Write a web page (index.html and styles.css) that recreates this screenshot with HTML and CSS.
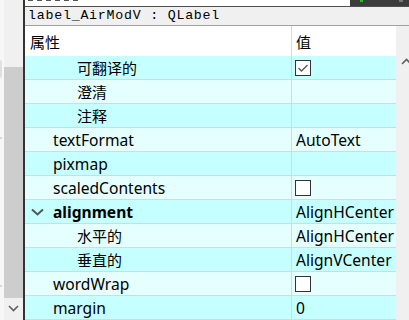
FILE: index.html
```html
<!DOCTYPE html>
<html>
<head>
<meta charset="utf-8">
<link rel="stylesheet" href="styles.css">
</head>
<body>
<div class="app">
  <div class="left">
    <div class="edge">
      <span class="mark m1"></span>
      <span class="mark m2"></span>
      <span class="mark m3"></span>
    </div>
    <div class="vscroll">
      <div class="track-top"></div>
      <div class="thumb"></div>
      <div class="arrow-down">
        <svg width="19" height="22" viewBox="0 0 19 22"><polyline points="5,8 9.5,12.5 14,8" fill="none" stroke="#606060" stroke-width="1.6"/></svg>
      </div>
    </div>
  </div>
  <div class="main">
    <div class="top">
      <div class="filter">
        <span class="dash"></span><span class="dash"></span><span class="dash"></span><span class="dash"></span><span class="dash"></span><span class="dash"></span>
      </div>
      <div class="dark"><span class="green"></span><span class="greymark"></span></div>
    </div>
    <div class="titlebar">label_AirModV : QLabel</div>
    <div class="body">
      <div class="table">
        <div class="row head">
          <div class="name cjk">属性</div>
          <div class="val cjk">值</div>
        </div>
        <div class="row dk">
          <div class="name l2 cjk">可翻译的</div>
          <div class="val">
            <svg class="cb" width="16" height="16" viewBox="0 0 16 16"><rect x="0.5" y="0.5" width="15" height="15" fill="#fff" stroke="#333"/><polyline points="3.5,8 6.5,11 12.5,5" fill="none" stroke="#555" stroke-width="1.3"/></svg>
          </div>
        </div>
        <div class="row lt">
          <div class="name l2 cjk">澄清</div>
          <div class="val"></div>
        </div>
        <div class="row dk">
          <div class="name l2 cjk">注释</div>
          <div class="val"></div>
        </div>
        <div class="row lt">
          <div class="name l1">textFormat</div>
          <div class="val">AutoText</div>
        </div>
        <div class="row dk">
          <div class="name l1">pixmap</div>
          <div class="val"></div>
        </div>
        <div class="row lt">
          <div class="name l1">scaledContents</div>
          <div class="val">
            <svg class="cb" width="16" height="16" viewBox="0 0 16 16"><rect x="0.5" y="0.5" width="15" height="15" fill="#fff" stroke="#333"/></svg>
          </div>
        </div>
        <div class="row dk">
          <div class="name l1 bold">
            <svg class="chev" width="13" height="8" viewBox="0 0 13 8"><polyline points="1,1.5 6.5,6.5 12,1.5" fill="none" stroke="#555" stroke-width="2"/></svg>alignment</div>
          <div class="val">AlignHCenter|AlignVCenter</div>
        </div>
        <div class="row lt">
          <div class="name l2 cjk">水平的</div>
          <div class="val">AlignHCenter</div>
        </div>
        <div class="row dk">
          <div class="name l2 cjk">垂直的</div>
          <div class="val">AlignVCenter</div>
        </div>
        <div class="row lt">
          <div class="name l1">wordWrap</div>
          <div class="val">
            <svg class="cb" width="16" height="16" viewBox="0 0 16 16"><rect x="0.5" y="0.5" width="15" height="15" fill="#fff" stroke="#333"/></svg>
          </div>
        </div>
        <div class="row dk">
          <div class="name l1">margin</div>
          <div class="val">0</div>
        </div>
      </div>
      <div class="rscroll">
        <svg width="13" height="16" viewBox="0 0 13 16"><polyline points="6,12 10.5,7.5 15,12" fill="none" stroke="#606060" stroke-width="1.6"/></svg>
      </div>
    </div>
  </div>
</div>
</body>
</html>
```
FILE: styles.css
```css
html, body {
  margin: 0;
  padding: 0;
}
body {
  width: 409px;
  height: 320px;
  overflow: hidden;
  background: #f0f0f0;
  font-family: "Noto Sans", "Noto Sans CJK SC", sans-serif;
  font-size: 15.6px;
  color: #000;
}
.app {
  display: flex;
  height: 320px;
}
.left {
  width: 23px;
  display: flex;
  border-right: 2px solid #333;
  flex: none;
}
.edge {
  width: 4px;
  background: #f7f7f7;
  position: relative;
}
.mark {
  position: absolute;
  left: 0;
  width: 2px;
  background: #d8d8d8;
}
.m1 { top: 60px; height: 18px; border-radius: 0 2px 2px 0; background: #e0e0e0; }
.m2 { top: 137px; height: 2px; }
.m3 { top: 285px; height: 2px; }
.vscroll {
  width: 19px;
  display: flex;
  flex-direction: column;
  background: #f0f0f0;
}
.track-top { height: 67px; }
.thumb {
  height: 231px;
  background: #cdcdcd;
}
.arrow-down {
  height: 22px;
}
.arrow-down svg { display: block; }
.main {
  flex: 1;
  display: flex;
  flex-direction: column;
  min-width: 0;
}
.top {
  height: 6px;
  display: flex;
  border-bottom: 1px solid #505050;
}
.filter {
  width: 322px;
  background: #fff;
  display: flex;
  gap: 4px;
  padding-left: 3px;
  align-items: flex-start;
}
.dash {
  width: 5px;
  height: 1px;
  background: #555;
}
.dark {
  flex: 1;
  background: #3c3c3c;
  position: relative;
}
.green {
  position: absolute;
  left: 10px;
  top: 0;
  width: 3px;
  height: 2px;
  background: #1fc01f;
}
.greymark {
  position: absolute;
  left: 49px;
  top: 0;
  width: 4px;
  height: 2px;
  background: #777;
}
.titlebar {
  height: 18px;
  line-height: 18px;
  border-bottom: 1px solid #a0a0a0;
  background: #f0f0f0;
  font-family: "Liberation Mono", monospace;
  font-size: 13.3px;
  letter-spacing: 0.75px;
  padding-left: 3px;
  white-space: pre;
}
.body {
  flex: 1;
  display: flex;
  min-height: 0;
}
.table {
  width: 371px;
  flex: none;
  overflow: hidden;
}
.rscroll {
  flex: 1;
  background: #f0f0f0;
  overflow: hidden;
}
.rscroll svg { display: block; margin-top: 26px; }
.row {
  display: grid;
  grid-template-columns: 267px 1fr;
  height: 23px;
  border-bottom: 1px solid #d8d8d8;
}
.row.head {
  height: 30px;
  border-bottom: none;
  background: #fff;
}
.dk { background: #c5ffff; }
.lt { background: #e5ffff; }
.name {
  display: flex;
  align-items: center;
  padding-left: 5px;
  border-right: 1px solid #d8d8d8;
  white-space: nowrap;
  overflow: hidden;
}
.name.l1 { padding-left: 28px; }
.name.l2 { padding-left: 52px; }
.val {
  display: flex;
  align-items: center;
  padding-left: 4px;
  white-space: nowrap;
  overflow: hidden;
}
.cjk {
  font-family: "Noto Sans CJK SC", sans-serif;
  font-size: 15px;
}
.bold { font-weight: bold; position: relative; }
.chev {
  position: absolute;
  left: 6px;
  top: 8px;
}
.cb {
  display: block;
  margin-left: -1px;
}
```
